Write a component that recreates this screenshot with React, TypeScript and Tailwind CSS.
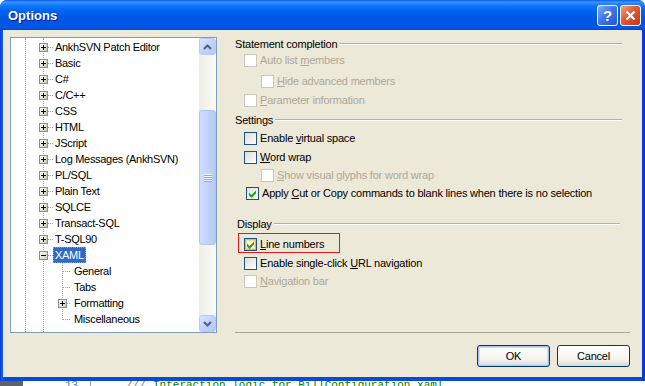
import React from 'react';

type TreeNode = { label: string; level: 1 | 2; box?: 'plus' | 'minus'; selected?: boolean; last?: boolean };

const nodes: TreeNode[] = [
  { label: 'AnkhSVN Patch Editor', level: 1, box: 'plus' },
  { label: 'Basic', level: 1, box: 'plus' },
  { label: 'C#', level: 1, box: 'plus' },
  { label: 'C/C++', level: 1, box: 'plus' },
  { label: 'CSS', level: 1, box: 'plus' },
  { label: 'HTML', level: 1, box: 'plus' },
  { label: 'JScript', level: 1, box: 'plus' },
  { label: 'Log Messages (AnkhSVN)', level: 1, box: 'plus' },
  { label: 'PL/SQL', level: 1, box: 'plus' },
  { label: 'Plain Text', level: 1, box: 'plus' },
  { label: 'SQLCE', level: 1, box: 'plus' },
  { label: 'Transact-SQL', level: 1, box: 'plus' },
  { label: 'T-SQL90', level: 1, box: 'plus' },
  { label: 'XAML', level: 1, box: 'minus', selected: true },
  { label: 'General', level: 2 },
  { label: 'Tabs', level: 2 },
  { label: 'Formatting', level: 2, box: 'plus' },
  { label: 'Miscellaneous', level: 2, last: true },
];

const DOT = '#a0a0a0';

function Guides({ node, id }: { node: TreeNode; id: string }) {
  const w = node.level === 1 ? 42 : 61;
  const bx = node.level === 1 ? 28.5 : 47.5;
  return (
    <svg width={w} height={16} className="shrink-0" shapeRendering="crispEdges">
      <defs>
        <linearGradient id={id} x1="0" y1="0" x2="1" y2="1">
          <stop offset="0" stopColor="#ffffff" />
          <stop offset="1" stopColor="#c9c7ba" />
        </linearGradient>
      </defs>
      <g stroke={DOT} strokeDasharray="1 1">
        <line x1={14.5} y1={0} x2={14.5} y2={16} />
        <line x1={32.5} y1={0} x2={32.5} y2={16} />
        {node.level === 1 && <line x1={37} y1={8.5} x2={42} y2={8.5} />}
        {node.level === 2 && <line x1={51.5} y1={0} x2={51.5} y2={node.last ? 9 : 16} />}
        {node.level === 2 && <line x1={node.box ? 56 : 52} y1={8.5} x2={60} y2={8.5} />}
      </g>
      {node.box && (
        <g>
          <rect x={bx} y={4.5} width={8} height={8} fill={`url(#${id})`} stroke="#7b8ea2" />
          <line x1={bx + 1.5} y1={8.5} x2={bx + 6.5} y2={8.5} stroke="#000" />
          {node.box === 'plus' && <line x1={bx + 4} y1={6} x2={bx + 4} y2={11} stroke="#000" />}
        </g>
      )}
    </svg>
  );
}

function Filler({ h }: { h: number }) {
  return (
    <svg width={42} height={h} className="shrink-0 block" shapeRendering="crispEdges">
      <g stroke={DOT} strokeDasharray="1 1">
        <line x1={14.5} y1={0} x2={14.5} y2={h} />
        <line x1={32.5} y1={0} x2={32.5} y2={h} />
      </g>
    </svg>
  );
}

function ScrollButton({ dir }: { dir: 'up' | 'down' }) {
  return (
    <div className="h-[17px] w-[17px] flex items-center justify-center rounded-[3px] border border-[#b9caf4] bg-[linear-gradient(135deg,#dbe5fd,#c1d2fb_50%,#b4c8f7)]">
      <svg width="9" height="6" viewBox="0 0 9 6">
        <path d={dir === 'up' ? 'M1 5 L4.5 1.5 L8 5' : 'M1 1 L4.5 4.5 L8 1'} stroke="#4d6185" strokeWidth="2" fill="none" />
      </svg>
    </div>
  );
}

function Tree() {
  return (
    <div className="flex h-[296px] w-[207px] border border-[#7f9db9] bg-white">
      <div className="flex-1 overflow-hidden flex flex-col text-[11px] tracking-[-0.3px] text-black">
        <Filler h={1} />
        {nodes.map((n, i) => (
          <div key={n.label} className="flex h-4 items-center whitespace-nowrap">
            <Guides node={n} id={`tb${i}`} />
            <span
              className={
                n.selected
                  ? 'h-4 leading-4 px-[2px] bg-[#316ac5] text-white outline-1 outline-dotted outline-[#ce953a] -outline-offset-1'
                  : 'h-4 leading-4 px-[2px]'
              }
            >
              {n.label}
            </span>
          </div>
        ))}
        <Filler h={8} />
      </div>
      <div className="w-[17px] flex flex-col bg-[linear-gradient(to_right,#eeede5,#fcfcf9)]">
        <ScrollButton dir="up" />
        <div className="flex-1 flex flex-col">
          <div className="mt-[55px] h-[135px] rounded-[3px] border border-[#b1c5f4] bg-[linear-gradient(to_right,#cfdcfd,#c2d4fc_50%,#b5caf8)] flex flex-col items-center justify-center gap-px">
            {[0, 1, 2, 3].map(k => (
              <div key={k} className="w-[8px] h-px bg-[#eef3fe] shadow-[0_1px_0_#8caaf0]" />
            ))}
          </div>
        </div>
        <ScrollButton dir="down" />
      </div>
    </div>
  );
}

function CheckBox({ disabled, checked, hover }: { disabled?: boolean; checked?: boolean; hover?: boolean }) {
  let cls = 'relative w-[13px] h-[13px] shrink-0 border ';
  if (disabled) cls += 'border-[#cac8bb] bg-white';
  else if (hover) cls += 'border-[#1c5180] bg-white shadow-[inset_0_0_0_1px_#f8b530,inset_0_0_0_2px_#fddc8e]';
  else cls += 'border-[#1c5180] bg-[linear-gradient(135deg,#dcdcd7,#ffffff)]';
  return (
    <span className={cls}>
      {checked && (
        <svg className="absolute left-0 top-0" width="11" height="11" viewBox="0 0 11 11">
          <path d="M2 4.5 L4.5 7 L9 2.5 L9 5.5 L4.5 10 L2 7.5 Z" fill="#21a121" />
        </svg>
      )}
    </span>
  );
}

function Option({
  cls,
  disabled,
  checked,
  hover,
  children,
}: {
  cls: string;
  disabled?: boolean;
  checked?: boolean;
  hover?: boolean;
  children: React.ReactNode;
}) {
  return (
    <div className={`relative flex items-center h-4 gap-[3px] whitespace-nowrap ${cls}`}>
      <CheckBox disabled={disabled} checked={checked} hover={hover} />
      <span className={disabled ? 'text-[#aca899]' : 'text-black'}>{children}</span>
    </div>
  );
}

function GroupTitle({ cls, children }: { cls: string; children: React.ReactNode }) {
  return (
    <div className={`flex items-center h-4 ${cls}`}>
      <span className="text-black">{children}</span>
      <div className="flex-1 ml-[2px] h-[2px] border-y border-t-[#b4b1a2] border-b-white" />
    </div>
  );
}

function XpButton({ primary, children }: { primary?: boolean; children: React.ReactNode }) {
  return (
    <button
      className={`w-[73px] h-[22px] rounded-[3px] border border-[#003c74] text-[11px] text-black bg-[linear-gradient(#ffffff,#f4f3ee_70%,#dcd8cc)] ${
        primary ? 'shadow-[inset_0_0_0_1px_#a9c1f1,inset_0_0_0_2px_#d2def8]' : ''
      }`}
    >
      {children}
    </button>
  );
}

export default function App() {
  return (
    <div className="w-[645px] h-[386px] overflow-hidden bg-white font-['Liberation_Sans',Arial,sans-serif]">
      <div className="h-[381px] flex flex-col rounded-t-[7px] bg-[linear-gradient(to_right,#0831d9,#1660ea_2px,#0a4ad8_4px,#0a4ad8_calc(100%-4px),#0831d9)] overflow-hidden">
        <div className="h-[30px] shrink-0 flex items-center pl-[8px] pr-[4px] bg-[linear-gradient(to_bottom,#0a5ae8_0%,#3d94ff_7%,#2288ff_12%,#0a72fb_22%,#0062f0_38%,#0058e8_55%,#0054e3_80%,#0057ea_92%,#0047c8_100%)]">
          <span className="flex-1 pt-[2px] text-[13px] font-bold text-white [text-shadow:1px_1px_0_#0a1a8a]">Options</span>
          <div className="flex gap-[2px] pt-[1px]">
            <div className="w-[21px] h-[21px] rounded-[3px] border border-white flex items-center justify-center bg-[linear-gradient(135deg,#85acf7,#4177e8_45%,#2356d3)] text-white font-bold text-[15px] leading-none">
              ?
            </div>
            <div className="w-[21px] h-[21px] rounded-[3px] border border-white flex items-center justify-center bg-[linear-gradient(135deg,#f0a17f,#e2582f_45%,#c2381a)]">
              <svg width="11" height="11" viewBox="0 0 11 11">
                <path d="M1.5 1.5 L9.5 9.5 M9.5 1.5 L1.5 9.5" stroke="#fff" strokeWidth="2.2" />
              </svg>
            </div>
          </div>
        </div>

        <div className="flex-1 mx-[3px] mb-[4px] bg-[#ece9d8] flex pt-[6px] pl-[7px] text-[11px] tracking-[-0.2px]">
          <div className="pt-[1px]">
            <Tree />
          </div>

          <div className="ml-[18px] w-[395px] flex flex-col">
            <div className="h-[296px] flex flex-col">
              <GroupTitle cls="mr-[8px]">Statement completion</GroupTitle>
              <Option cls="pl-[9px]" disabled>
                Auto list <u>m</u>embers
              </Option>
              <Option cls="pl-[26px] mt-[5px]" disabled>
                <u>H</u>ide advanced members
              </Option>
              <Option cls="pl-[9px] mt-[3px]" disabled>
                <u>P</u>arameter information
              </Option>

              <GroupTitle cls="mr-[8px] mt-[4px]">Settings</GroupTitle>
              <Option cls="pl-[9px] mt-[2px]">
                Enable <u>v</u>irtual space
              </Option>
              <Option cls="pl-[9px] mt-[3px]">
                <u>W</u>ord wrap
              </Option>
              <Option cls="pl-[26px] mt-[2px]" disabled>
                <u>S</u>how visual glyphs for word wrap
              </Option>
              <Option cls="pl-[11px] mt-[2px]" checked>
                Apply <u>C</u>ut or Copy commands to blank lines when there is no selection
              </Option>

              <GroupTitle cls="pl-[2px] mr-[10px] mt-[15px]">Display</GroupTitle>
              <Option cls="pl-[9px] mt-[4px]" checked hover>
                <u>L</u>ine numbers
                <span className="absolute left-[3px] top-[-3px] w-[102px] h-[20px] border border-[#e8191b] pointer-events-none" />
              </Option>
              <Option cls="pl-[9px] mt-[3px]">
                Enable single-click <u>U</u>RL navigation
              </Option>
              <Option cls="pl-[9px] mt-[2px]" disabled>
                <u>N</u>avigation bar
              </Option>
            </div>
            <div className="h-px bg-[#aca899]" />
            <div className="flex justify-end gap-[7px] mt-[12px]">
              <XpButton primary>OK</XpButton>
              <XpButton>Cancel</XpButton>
            </div>
          </div>
        </div>
      </div>

      <div className="h-[5px] flex overflow-hidden bg-white">
        <div className="w-[23px] bg-[#5f6368]" />
        <div className="flex items-start -mt-[2px] font-['Liberation_Mono',monospace] text-[11px] leading-[13px] whitespace-nowrap">
          <span className="ml-[42px] text-[#2b91af]">13</span>
          <span className="ml-[12px] w-px h-[13px] bg-[#a0a0a0]" />
          <span className="ml-[35px] text-[#808080]">///</span>
          <span className="ml-[7px] text-[#008000]">Interaction logic for BillConfiguration.xaml</span>
        </div>
      </div>
    </div>
  );
}
